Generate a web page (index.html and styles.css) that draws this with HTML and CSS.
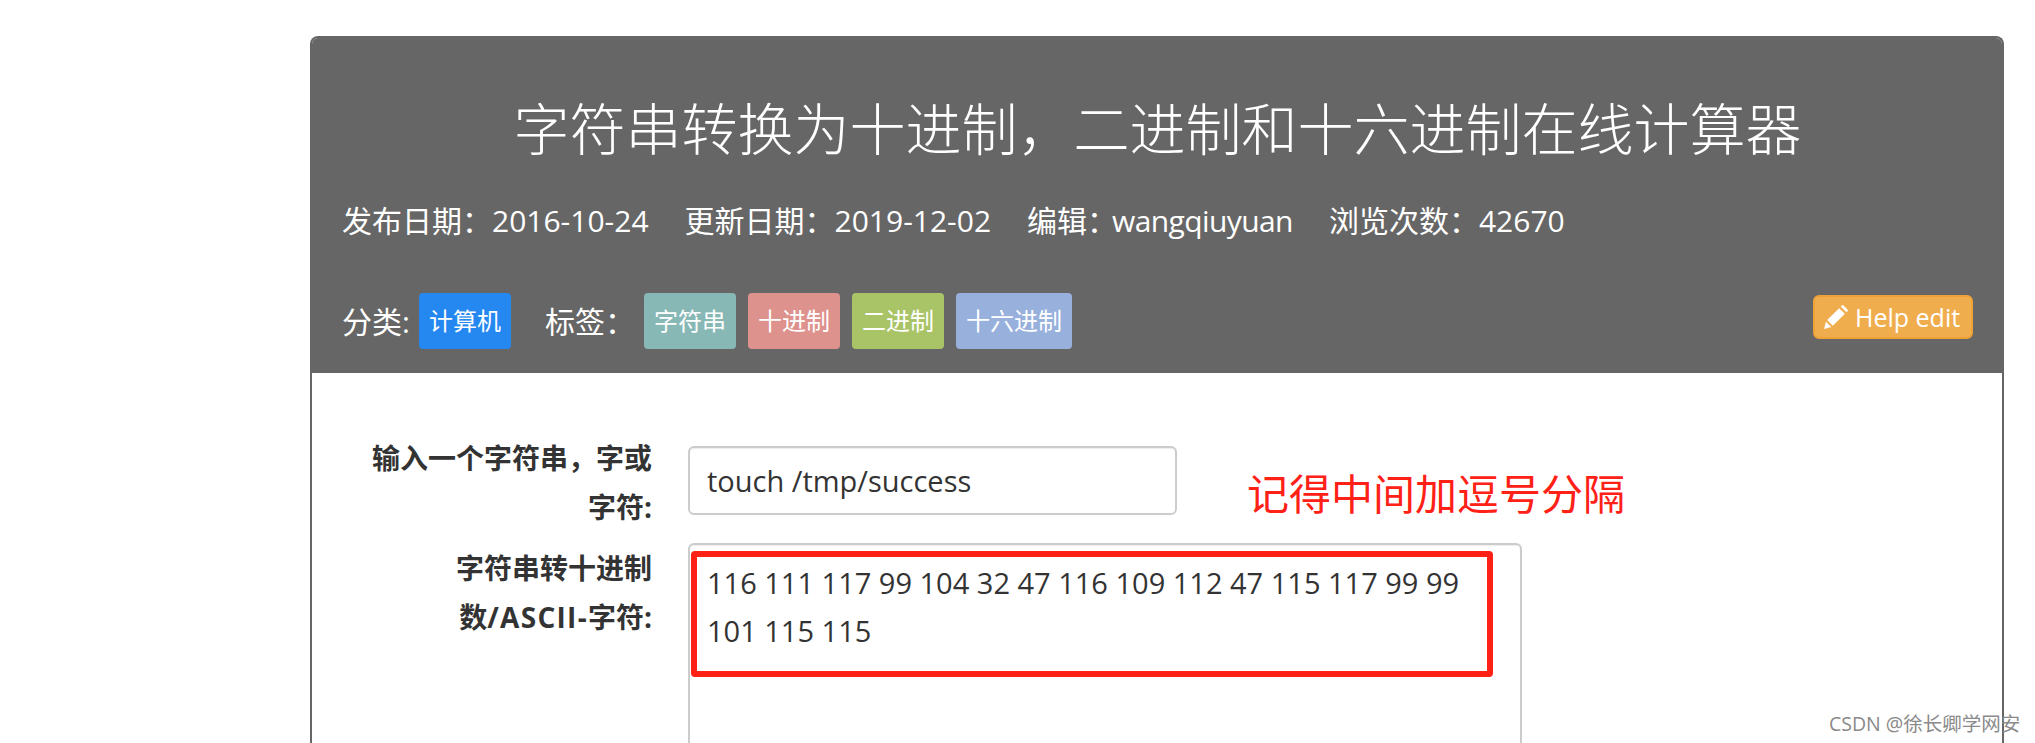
FILE: index.html
```html
<!DOCTYPE html>
<html lang="zh-CN">
<head>
<meta charset="utf-8">
<title>字符串转换为十进制，二进制和十六进制在线计算器</title>
<link rel="stylesheet" href="styles.css">
</head>
<body>
<main class="panel">
  <header class="panel-head">
    <h1 class="title">字符串转换为十进制，二进制和十六进制在线计算器</h1>
    <div class="meta">
      <span>发布日期：2016-10-24</span>
      <span>更新日期：2019-12-02</span>
      <span>编辑：<span class="editor">wangqiuyuan</span></span>
      <span>浏览次数：42670</span>
    </div>
    <div class="tags">
      <span class="tag-label">分类:</span>
      <a class="tag tag-blue">计算机</a>
      <span class="tag-label tag-label-second">标签：</span>
      <a class="tag tag-teal">字符串</a>
      <a class="tag tag-rose">十进制</a>
      <a class="tag tag-green">二进制</a>
      <a class="tag tag-periwinkle">十六进制</a>
      <a class="help-btn">
        <svg class="pencil" viewBox="0 0 24 24" aria-hidden="true"><path d="M1 23l1.8-7L8 21.200z"/><path d="M4 14.500L15.500 3l5.500 5.500L9.500 20z"/><path d="M17 1.500l1-1a1.200 1.200 0 0 1 1.700 0l3.800 3.800a1.200 1.200 0 0 1 0 1.700l-1 1z"/></svg>
        Help edit
      </a>
    </div>
  </header>
  <form class="panel-body">
    <div class="row row-input">
      <label class="field-label field-label-first" for="src">输入一个字符串，字或<br>字符:</label>
      <input class="field input" id="src" type="text" value="touch /tmp/success">
      <span class="note">记得中间加逗号分隔</span>
    </div>
    <div class="row">
      <label class="field-label field-label-second" for="dec">字符串转十进制<br>数<span class="ascii">/ASCII-</span>字符:</label>
      <div class="area-wrap">
        <textarea class="field area" id="dec">116 111 117 99 104 32 47 116 109 112 47 115 117 99 99 101 115 115</textarea>
        <div class="highlight"></div>
      </div>
    </div>
  </form>
</main>
<div class="watermark">CSDN @徐长卿学网安</div>
</body>
</html>
```

FILE: styles.css
```css
* { box-sizing: border-box; }
html, body { margin: 0; height: 743px; overflow: hidden; background: #fff; }
body {
  position: relative;
  padding: 36px 31px 0 310px;
  font-family: "Open Sans", "Noto Sans CJK SC", sans-serif;
  color: #333;
}
.panel {
  height: 707px;
  border: 2px solid #666;
  border-bottom: 0;
  border-radius: 8px 8px 0 0;
  overflow: hidden;
}
.panel-head {
  height: 335px;
  background: #666;
  color: #fff;
  padding: 0 29px 0 30px;
}
.title {
  margin: 0;
  padding-top: 52px;
  height: 147px;
  font-size: 56px;
  line-height: 76px;
  font-weight: 300;
  text-align: center;
}
.meta {
  display: flex;
  gap: 36px;
  font-size: 30px;
  line-height: 40px;
  margin-top: 16px;
}
.editor { letter-spacing: -.6px; margin-left: -5px; }
.tags {
  display: flex;
  align-items: center;
  margin-top: 52px;
  font-size: 30px;
}
.tag-label { margin-right: 9px; padding-bottom: 2px; }
.tag-label-second { margin-left: 22px; margin-right: 9px; }
.tag {
  height: 56px;
  line-height: 56px;
  padding: 0 10px;
  margin-right: 12px;
  border-radius: 4px;
  font-size: 24px;
  color: #fff;
}
.tag-blue { background: #2488f0; }
.tag-teal { background: #88b8b6; }
.tag-rose { background: #de928e; }
.tag-green { background: #a9c467; }
.tag-periwinkle { background: #97b0dc; }
.help-btn {
  display: flex;
  align-items: center;
  gap: 7px;
  width: 160px;
  height: 44px;
  margin-left: auto;
  padding: 0 0 0 8px;
  position: relative;
  top: -4px;
  background: #f0ad4e;
  border: 2px solid #eea236;
  border-radius: 6px;
  font-size: 25px;
  white-space: nowrap;
}
.pencil { width: 25px; height: 25px; fill: #fff; flex: none; }
.panel-body { padding: 73px 0 0; }
.row {
  display: grid;
  grid-template-columns: 340px 1fr;
  column-gap: 36px;
  align-items: start;
  position: relative;
}
.row-input { margin-bottom: 11px; }
.field-label {
  display: block;
  text-align: right;
  font-weight: 700;
  font-size: 28px;
  line-height: 49px;
}
.field-label-first { margin-top: -12px; }
.field-label-second { margin-top: 1px; }
.ascii { letter-spacing: 1.300px; }
.field {
  display: block;
  background: #fff;
  border: 2px solid #ccc;
  border-radius: 6px;
  box-shadow: inset 0 1px 1px rgba(0,0,0,.075);
  font-family: "Open Sans", "Noto Sans CJK SC", sans-serif;
  font-size: 29px;
  color: #333;
  padding: 0 17px 0 17px;
  outline: none;
}
.input { width: 489px; height: 69px; }
.area {
  width: 834px;
  height: 200px;
  border-bottom: 0;
  border-radius: 6px 6px 0 0;
  line-height: 48px;
  padding-top: 14px;
  resize: none;
  overflow: hidden;
}
.area-wrap { position: relative; }
.highlight {
  position: absolute;
  left: 3px;
  top: 8px;
  width: 802px;
  height: 126px;
  border: 6px solid #ff2016;
  border-radius: 4px;
  pointer-events: none;
}
.note {
  position: absolute;
  left: 935px;
  top: 20px;
  font-size: 42px;
  line-height: 56px;
  color: #ff2016;
  white-space: nowrap;
}
.watermark {
  position: absolute;
  left: 1829px;
  top: 711px;
  font-size: 19.500px;
  line-height: 26px;
  color: #8a8a8a;
  white-space: nowrap;
}
```
